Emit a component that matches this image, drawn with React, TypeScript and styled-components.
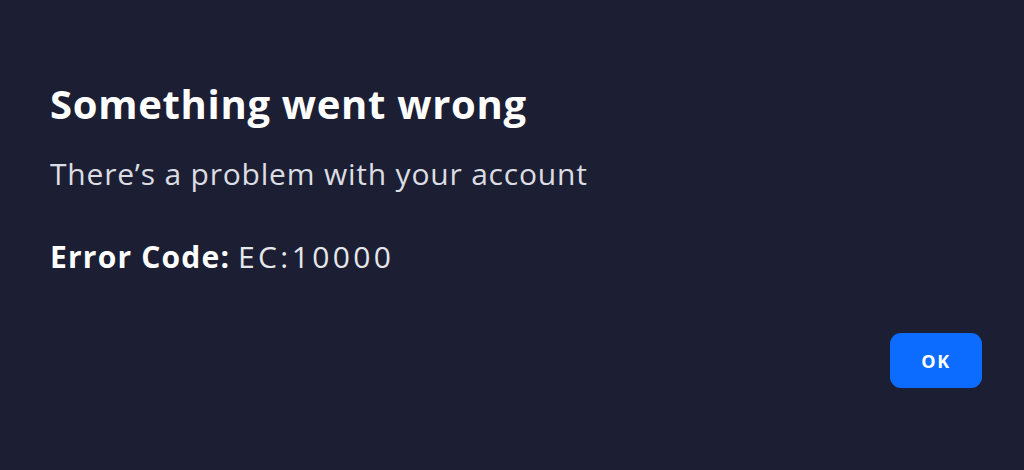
import React from 'react';
import styled, { createGlobalStyle } from 'styled-components';

const GlobalStyle = createGlobalStyle`
    html, body {
        margin: 0;
        padding: 0;
        background: #1c1f33;
    }
    body {
        font-family: "Open Sans", "Noto Sans", sans-serif;
    }
`;

const Dialog = styled.div`
    box-sizing: border-box;
    width: 1024px;
    height: 470px;
    background: #1c1f33;
    padding: 80px 42px 82px 50px;
    display: flex;
    flex-direction: column;
`;

const Title = styled.h1`
    margin: 0;
    font-size: 40px;
    line-height: 48px;
    font-weight: 700;
    letter-spacing: 0.7px;
    color: #ffffff;
`;

const Message = styled.p`
    margin: 29px 0 0;
    font-size: 30px;
    line-height: 34px;
    font-weight: 400;
    letter-spacing: 0.8px;
    color: #dcdde2;
`;

const ErrorLine = styled.p`
    margin: 49px 0 0;
    font-size: 30px;
    line-height: 34px;
    color: #e6e7eb;
`;

const ErrorLabel = styled.strong`
    font-weight: 700;
    letter-spacing: 1.2px;
    color: #ffffff;
`;

const ErrorValue = styled.span`
    letter-spacing: 3.4px;
`;

const Footer = styled.div`
    margin-top: auto;
    display: flex;
    justify-content: flex-end;
`;

const Button = styled.button`
    width: 92px;
    height: 55px;
    border: none;
    border-radius: 11px;
    background: #0b6cff;
    color: #ffffff;
    font-family: "Open Sans", sans-serif;
    font-size: 18px;
    font-weight: 700;
    letter-spacing: 1.5px;
    cursor: pointer;
`;

export default function App() {
    return (
        <>
            <GlobalStyle />
            <Dialog>
                <Title>Something went wrong</Title>
                <Message>There’s a problem with your account</Message>
                <ErrorLine>
                    <ErrorLabel>Error Code:</ErrorLabel> <ErrorValue>EC:10000</ErrorValue>
                </ErrorLine>
                <Footer>
                    <Button>OK</Button>
                </Footer>
            </Dialog>
        </>
    );
}
